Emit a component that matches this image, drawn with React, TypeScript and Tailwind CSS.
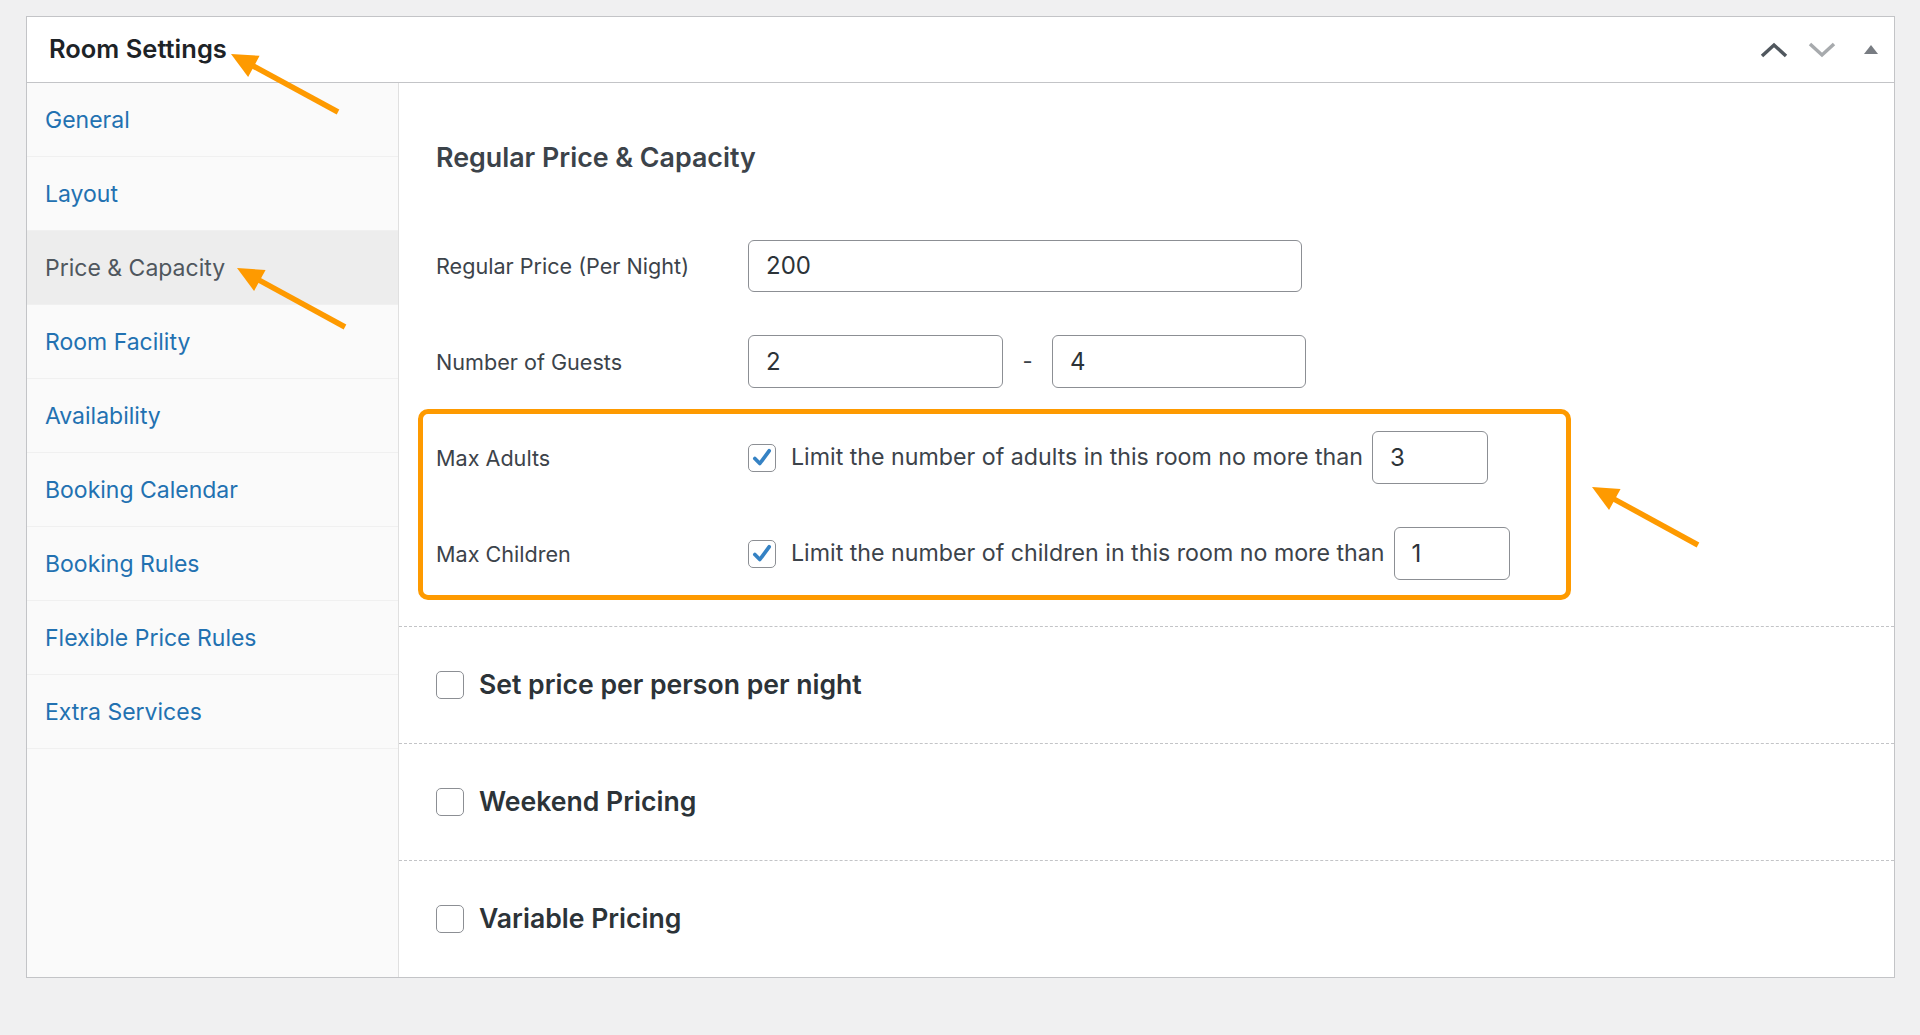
import React from "react";

const navItems = [
  "General",
  "Layout",
  "Price & Capacity",
  "Room Facility",
  "Availability",
  "Booking Calendar",
  "Booking Rules",
  "Flexible Price Rules",
  "Extra Services",
];

const font = { fontFamily: "Inter, 'Noto Sans', sans-serif" };

function Arrow({ from, to }: { from: [number, number]; to: [number, number] }) {
  const dx = to[0] - from[0];
  const dy = to[1] - from[1];
  const len = Math.hypot(dx, dy);
  const ux = dx / len;
  const uy = dy / len;
  const headLen = 26;
  const half = 12;
  const bx = to[0] - ux * headLen;
  const by = to[1] - uy * headLen;
  const p1 = `${bx - uy * half},${by + ux * half}`;
  const p2 = `${bx + uy * half},${by - ux * half}`;
  return (
    <g>
      <line x1={from[0]} y1={from[1]} x2={bx + ux * 4} y2={by + uy * 4} stroke="#fe9a00" strokeWidth={5.5} />
      <polygon points={`${to[0]},${to[1]} ${p1} ${p2}`} fill="#fe9a00" />
    </g>
  );
}

function CheckBox({ checked }: { checked?: boolean }) {
  return (
    <span className="flex h-[28px] w-[28px] shrink-0 items-center justify-center rounded-[5px] border-[1.5px] border-[#8c8f94] bg-white">
      {checked && (
        <svg width="22" height="22" viewBox="0 0 20 20">
          <path d="M3.5 10.5 L8 15 L16.5 3.5" fill="none" stroke="#3582c4" strokeWidth="3.4" strokeLinecap="round" strokeLinejoin="round" />
        </svg>
      )}
    </span>
  );
}

function Field({ value, className }: { value: string; className: string }) {
  return (
    <div className={`flex items-center rounded-[6px] border-[1.5px] border-[#8c8f94] bg-white pl-[17px] text-[24px] text-[#2c3338] ${className}`}>
      {value}
    </div>
  );
}

export default function App() {
  return (
    <div className="relative min-h-screen bg-[#f0f0f1] pl-[26px] pr-[25px] pt-[16px]" style={font}>
      <div className="flex h-[962px] flex-col border border-[#c3c4c7] bg-white">
        <div className="flex h-[66px] shrink-0 items-center justify-between border-b border-[#c3c4c7] pl-[22px] pr-[15px]">
          <h2 className="text-[25.5px] font-semibold text-[#1d2327]">Room Settings</h2>
          <div className="flex items-center">
            <svg width="28" height="16" viewBox="0 0 28 16">
              <polyline points="2,14 14,3 26,14" fill="none" stroke="#50575e" strokeWidth="3.5" />
            </svg>
            <svg width="28" height="16" viewBox="0 0 28 16" className="ml-[20px]">
              <polyline points="2,2 14,13 26,2" fill="none" stroke="#a7aaad" strokeWidth="3.5" />
            </svg>
            <svg width="16" height="12" viewBox="0 0 16 12" className="ml-[27px]">
              <polygon points="8,1 15,10 1,10" fill="#787c82" />
            </svg>
          </div>
        </div>
        <div className="flex flex-1">
          <div className="w-[372px] shrink-0 border-r border-[#e0e0e0] bg-[#fafafa]">
            {navItems.map((item) => (
              <div
                key={item}
                className={`flex h-[74px] items-center border-b border-[#f0f0f0] pl-[18px] pt-[2px] text-[23px] ${
                  item === "Price & Capacity" ? "bg-[#ededed] text-[#50575e]" : "text-[#2271b1]"
                }`}
              >
                {item}
              </div>
            ))}
          </div>
          <div className="flex-1">
            <div className="pb-[26px] pl-[37px]">
              <h3 className="mt-[58px] text-[26.8px] font-semibold leading-[32px] text-[#3c434a]">Regular Price &amp; Capacity</h3>
              <div className="mt-[67px] flex items-center">
                <div className="w-[312px] pt-[1px] text-[21.6px] text-[#3c434a]">Regular Price (Per Night)</div>
                <Field value="200" className="h-[52px] w-[554px]" />
              </div>
              <div className="mt-[43px] flex items-center">
                <div className="w-[312px] pt-[1px] text-[21.6px] text-[#3c434a]">Number of Guests</div>
                <Field value="2" className="h-[53px] w-[255px]" />
                <div className="w-[49px] text-center text-[22px] text-[#3c434a]">-</div>
                <Field value="4" className="h-[53px] w-[254px]" />
              </div>
              <div className="ml-[-18px] mt-[21px] w-[1153px] rounded-[10px] border-[5px] border-[#fe9a00] pb-[15px] pl-[13px] pt-[17px]">
                <div className="flex items-center">
                  <div className="w-[312px] pt-[2px] text-[21.6px] text-[#3c434a]">Max Adults</div>
                  <CheckBox checked />
                  <span className="ml-[15px] text-[23.2px] text-[#3c434a]">Limit the number of adults in this room no more than</span>
                  <Field value="3" className="ml-[9px] h-[53px] w-[116px]" />
                </div>
                <div className="mt-[43px] flex items-center">
                  <div className="w-[312px] pt-[2px] text-[21.6px] text-[#3c434a]">Max Children</div>
                  <CheckBox checked />
                  <span className="ml-[15px] text-[23.2px] text-[#3c434a]">Limit the number of children in this room no more than</span>
                  <Field value="1" className="ml-[9px] h-[53px] w-[116px]" />
                </div>
              </div>
            </div>
            {["Set price per person per night", "Weekend Pricing", "Variable Pricing"].map((label) => (
              <div key={label} className="flex h-[117px] items-center border-t-[1.5px] border-dashed border-[#c3c4c7] pl-[37px]">
                <CheckBox />
                <span className="ml-[15px] text-[26.6px] font-semibold text-[#2c3338]">{label}</span>
              </div>
            ))}
          </div>
        </div>
      </div>
      <svg className="pointer-events-none absolute left-0 top-0" width="1920" height="1035">
        <Arrow from={[338, 112]} to={[231, 54]} />
        <Arrow from={[345, 327]} to={[237, 268]} />
        <Arrow from={[1698, 545]} to={[1592, 487]} />
      </svg>
    </div>
  );
}
